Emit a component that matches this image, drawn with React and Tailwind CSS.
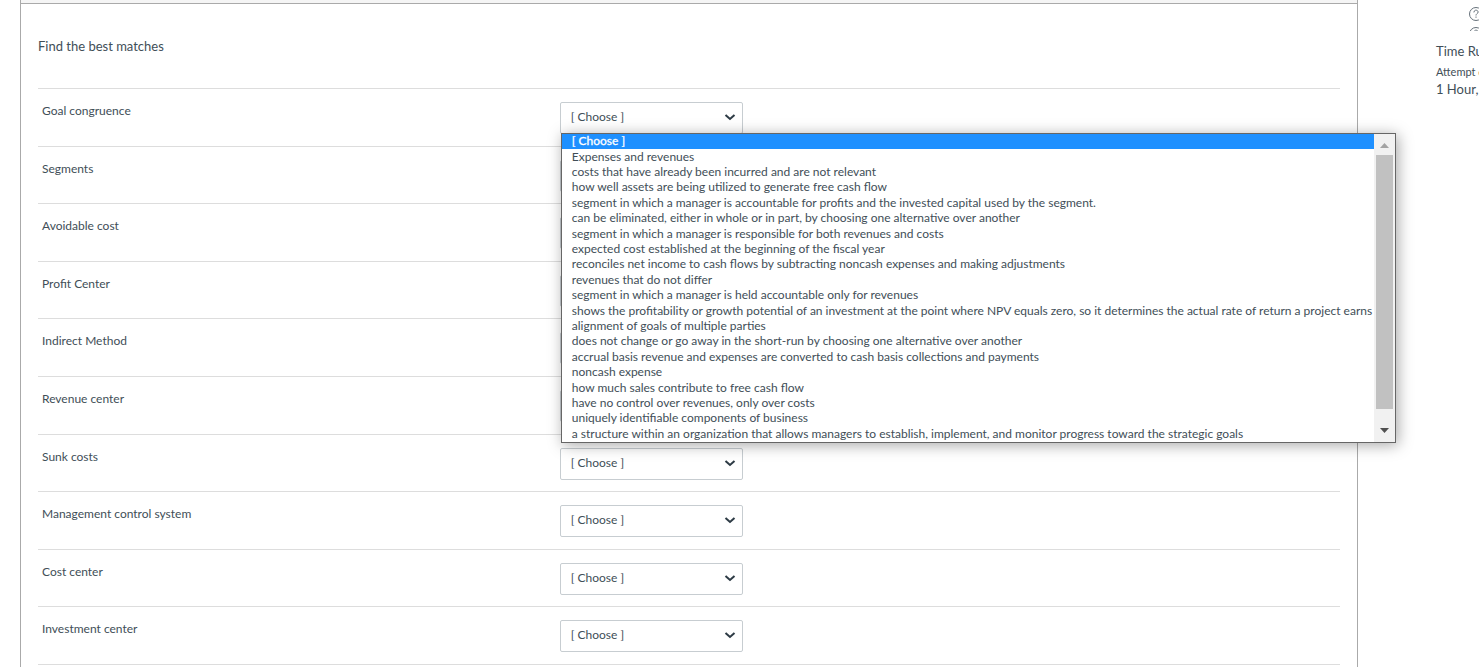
import React from "react";

const terms = [
  "Goal congruence",
  "Segments",
  "Avoidable cost",
  "Profit Center",
  "Indirect Method",
  "Revenue center",
  "Sunk costs",
  "Management control system",
  "Cost center",
  "Investment center",
];

const options = [
  "[ Choose ]",
  "Expenses and revenues",
  "costs that have already been incurred and are not relevant",
  "how well assets are being utilized to generate free cash flow",
  "segment in which a manager is accountable for profits and the invested capital used by the segment.",
  "can be eliminated, either in whole or in part, by choosing one alternative over another",
  "segment in which a manager is responsible for both revenues and costs",
  "expected cost established at the beginning of the fiscal year",
  "reconciles net income to cash flows by subtracting noncash expenses and making adjustments",
  "revenues that do not differ",
  "segment in which a manager is held accountable only for revenues",
  "shows the profitability or growth potential of an investment at the point where NPV equals zero, so it determines the actual rate of return a project earns",
  "alignment of goals of multiple parties",
  "does not change or go away in the short-run by choosing one alternative over another",
  "accrual basis revenue and expenses are converted to cash basis collections and payments",
  "noncash expense",
  "how much sales contribute to free cash flow",
  "have no control over revenues, only over costs",
  "uniquely identifiable components of business",
  "a structure within an organization that allows managers to establish, implement, and monitor progress toward the strategic goals",
];

function OptionList() {
  return (
    <div className="absolute left-px top-[31px] z-10 flex w-[835px] border border-[#666] bg-white shadow-[2px_2px_14px_rgba(0,0,0,0.35)]">
      <ul role="listbox" aria-label="Goal congruence options" className="grid h-[308px] min-w-0 flex-1 auto-rows-fr">
        {options.map((text, i) => (
          <li
            key={text}
            role="option"
            aria-selected={i === 0}
            className={
              i === 0
                ? "flex items-center whitespace-nowrap bg-[#1e90ff] pb-[2px] pl-[10px] leading-[13px] text-white [-webkit-text-stroke:0.3px_white]"
                : "flex items-center whitespace-nowrap pb-[2px] pl-[10px] leading-[13px]"
            }
          >
            {text}
          </li>
        ))}
      </ul>
      <div className="flex w-[21px] flex-col items-center bg-[#f1f1f1]">
        <svg className="h-[21px] w-[17px] shrink-0" viewBox="0 0 17 21" aria-hidden="true">
          <path d="M4 14h9L8.500 9z" fill="#a3a3a3" />
        </svg>
        <div className="mb-[33px] w-[17px] flex-1 bg-[#c1c1c1]" />
        <svg className="absolute bottom-0 h-[21px] w-[17px]" viewBox="0 0 17 21" aria-hidden="true">
          <path d="M4 7h9L8.500 12z" fill="#505050" />
        </svg>
      </div>
    </div>
  );
}

function MatchRow({ term, id, open }) {
  return (
    <div className="flex items-start border-t border-[#dddddd]">
      <label htmlFor={id} className="w-2/5 shrink-0 pl-1 pt-[14px] leading-4">
        {term}
      </label>
      <div className="relative ml-px mt-[13px] w-[183px]">
        <select
          id={id}
          className="block h-8 w-full appearance-none rounded-[2px] border border-[#c7cdd1] bg-white pb-[2px] pl-[10px] pr-8 text-[12px] outline-none"
        >
          <option>[ Choose ]</option>
        </select>
        <svg
          className="pointer-events-none absolute right-[7px] top-[11px] h-2 w-3"
          viewBox="0 0 12 8"
          fill="none"
          stroke="#2d3b45"
          strokeWidth="2"
          aria-hidden="true"
        >
          <path d="M1.500 2L6 6l4.500-4" />
        </svg>
        {open && <OptionList />}
      </div>
    </div>
  );
}

function HelpIcon() {
  return (
    <svg className="h-4 w-4 shrink-0" viewBox="0 0 16 16" fill="none" stroke="#66717a" aria-hidden="true">
      <circle cx="8" cy="8" r="6.500" />
      <path d="M5.900 6.400c0-3 4.200-2.800 4.200-.3C10.100 7.600 8 7.500 8 9.500M8 10.500v1.300" />
    </svg>
  );
}

export default function App() {
  return (
    <div className="flex h-screen overflow-hidden bg-white font-['Lato',sans-serif] text-[12px] text-[#414e57]">
      <main className="ml-5 min-w-0 flex-1 border-x border-[#aaaaaa]">
        <div className="h-1 border-b border-[#aaaaaa] bg-[#f5f5f5]" />
        <div className="px-[17px] pt-8">
          <p className="pb-[31px] text-[13px] leading-[21px]">Find the best matches</p>
          <div className="grid min-h-[576px] auto-rows-fr">
            {terms.map((term, i) => (
              <MatchRow key={term} term={term} id={`match-${i}`} open={i === 0} />
            ))}
          </div>
          <div className="border-t border-[#dddddd]" />
        </div>
      </main>
      <aside className="w-[121px] shrink-0 overflow-hidden whitespace-nowrap pl-[78px] pt-[6px]">
        <div className="flex h-[25px] flex-col gap-1 overflow-hidden pl-8">
          <HelpIcon />
          <HelpIcon />
        </div>
        <p className="pt-[10px] text-[13px] leading-5">Time Ru</p>
        <p className="pt-px text-[11px] leading-5">Attempt d</p>
        <p className="text-[13px] leading-[14px]">1 Hour,</p>
      </aside>
    </div>
  );
}
